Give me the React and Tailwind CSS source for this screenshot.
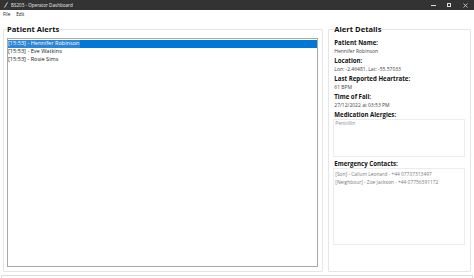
import React from "react";

export default function App() {
  const font = { fontFamily: '"Open Sans", "Noto Sans", sans-serif' };
  return (
    <div className="w-[474px] h-[278px] bg-white flex flex-col overflow-hidden" style={font}>
      {/* title bar */}
      <div className="h-[10px] bg-[#333333] flex items-center text-[#e8e8e8]">
        <svg width="6" height="6" viewBox="0 0 6 6" className="ml-[3px]">
          <path d="M4.5 0.5 L1.5 5.5" stroke="#ddd" strokeWidth="0.9" />
        </svg>
        <span className="ml-[2px] text-[4.6px] leading-none">BS203 - Operator Dashboard</span>
        <div className="ml-auto flex items-center h-full">
          <div className="w-[16px] flex justify-center"><div className="w-[5px] h-[1px] bg-[#ddd]" /></div>
          <div className="w-[16px] flex justify-center"><div className="w-[4px] h-[4px] border border-[#ddd]" /></div>
          <div className="w-[16px] flex justify-center mr-[1px]">
            <svg width="5" height="5" viewBox="0 0 5 5"><path d="M0.5 0.5 L4.5 4.5 M4.5 0.5 L0.5 4.5" stroke="#ddd" strokeWidth="0.8" /></svg>
          </div>
        </div>
      </div>
      {/* menu */}
      <div className="h-[8px] flex items-center gap-[6px] pl-[3px] text-[4.6px] leading-none text-[#111]">
        <span>File</span>
        <span>Edit</span>
      </div>
      {/* content */}
      <div className="flex gap-[5px] px-[3px] pt-[6px] h-[254px]">
        <fieldset className="w-[321px] border border-[#e6e6e6] rounded-[1px] px-[3px] pb-[4px] flex flex-col min-w-0">
          <legend className="ml-0 px-0 text-[7.6px] leading-[10px] font-bold text-[#111]">Patient Alerts</legend>
          <div className="mt-[4px] flex-1 border border-[#a9a9a9] mr-[1px] pt-[1px] text-[5.6px] leading-[7.8px] text-[#1a1a1a]">
            <div className="bg-[#0078d7] text-white h-[7.8px] flex"><span className="bg-[#2a86d8] pr-[1px]">[15:53] - Hennifer Robinson</span></div>
            <div className="h-[7.8px]">[15:53] - Eve Watkins</div>
            <div className="h-[7.8px]">[15:53] - Rosie Sims</div>
          </div>
        </fieldset>
        <fieldset className="w-[143px] border border-[#e6e6e6] rounded-[1px] px-[5px] pb-[26px] flex flex-col min-w-0">
          <legend className="ml-0 px-0 text-[7.6px] leading-[10px] font-bold text-[#111]">Alert Details</legend>
          <div className="pt-[4px] flex flex-col text-[#111]">
            <div className="text-[6.1px] font-bold leading-[9px]">Patient Name:</div>
            <div className="text-[5px] leading-[9px] text-[#444]">Hennifer Robinson</div>
            <div className="text-[6.1px] font-bold leading-[9px]">Location:</div>
            <div className="text-[5px] leading-[9px] text-[#444]">Lon: -2.46481, Lat: -55.57033</div>
            <div className="text-[6.1px] font-bold leading-[9px]">Last Reported Heartrate:</div>
            <div className="text-[5px] leading-[9px] text-[#444]">61 BPM</div>
            <div className="text-[6.1px] font-bold leading-[9px]">Time of Fall:</div>
            <div className="text-[5px] leading-[9px] text-[#444]">27/12/2022 at 03:53 PM</div>
            <div className="text-[6.1px] font-bold leading-[9px]">Medication Alergies:</div>
          </div>
          <div className="-ml-[1px] h-[38px] border border-[#ececec] px-[1px] text-[4.8px] leading-[7px] text-[#8a8a8a]">Penicillin</div>
          <div className="mt-[3px] text-[6.1px] font-bold leading-[8px] text-[#111]">Emergency Contacts:</div>
          <div className="-ml-[1px] flex-1 border border-[#ececec] px-[1px] pt-[1px] text-[4.9px] leading-[8px] text-[#7a7a7a]">
            <div>[Son] - Callum Leonard - +44 07707313497</div>
            <div>[Neighbour] - Zoe Jackson - +44 07756391172</div>
          </div>
        </fieldset>
      </div>
      <div className="mt-[3px] mx-[1px] h-[3px] border-t border-x border-[#dcdcdc]" />
    </div>
  );
}
